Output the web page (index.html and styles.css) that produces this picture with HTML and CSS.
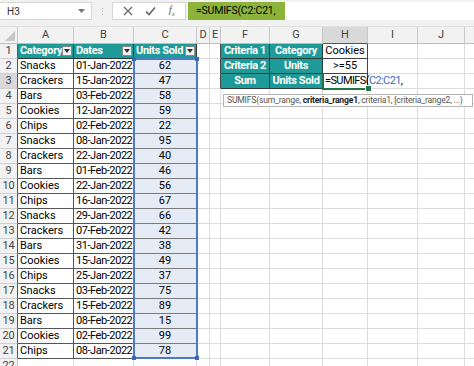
FILE: index.html
```html
<!DOCTYPE html>
<html lang="en">
<head>
    <meta charset="UTF-8">
    <meta name="viewport" content="width=device-width, initial-scale=1.0">
    <title>SUMIFS</title>
    <link rel="stylesheet" href="styles.css">
</head>
<body>
    <div class="formula-bar">
        <div class="name-box">
            <span>H3</span>
            <svg class="caret" width="7" height="4" viewBox="0 0 7 4"><polygon points="0,0 7,0 3.5,4" fill="#777"/></svg>
        </div>
        <div class="grip"><i></i><i></i><i></i></div>
        <div class="fx-buttons">
            <svg width="10" height="10" viewBox="0 0 10 10"><path d="M1 1 L9 9 M9 1 L1 9" stroke="#666" stroke-width="1.2" fill="none"/></svg>
            <svg width="11" height="10" viewBox="0 0 11 10"><path d="M1 5.5 L4 8.5 L10 1.5" stroke="#666" stroke-width="1.6" fill="none"/></svg>
            <span class="fx">f<sub>x</sub></span>
        </div>
        <div class="formula-input">
            <span class="formula-text">=SUMIFS(C2:C21,</span>
        </div>
    </div>

    <div class="sheet">
        <div class="row col-head">
            <div class="corner"></div>
            <div>A</div><div>B</div><div>C</div><div>D</div><div>E</div>
            <div>F</div><div>G</div><div class="sel">H</div><div>I</div><div>J</div><div></div>
        </div>

        <div class="row">
            <div class="rh">1</div>
            <div class="th">Category<span class="filter"><svg width="6" height="4" viewBox="0 0 6 4"><polygon points="0,0 6,0 3,4" fill="#333"/></svg></span></div>
            <div class="th">Dates<span class="filter"><svg width="6" height="4" viewBox="0 0 6 4"><polygon points="0,0 6,0 3,4" fill="#333"/></svg></span></div>
            <div class="th">Units Sold<span class="filter"><svg width="6" height="4" viewBox="0 0 6 4"><polygon points="0,0 6,0 3,4" fill="#333"/></svg></span></div>
            <div></div><div class="edge"></div>
            <div class="crit">Criteria 1</div><div class="crit">Category</div><div class="val">Cookies</div>
            <div></div><div></div><div></div>
        </div>
        <div class="row">
            <div class="rh">2</div>
            <div class="d">Snacks</div><div class="d date">01-Jan-2022</div><div class="d num">62</div>
            <div></div><div class="edge"></div>
            <div class="crit">Criteria 2</div><div class="crit">Units</div><div class="val">&gt;=55</div>
            <div></div><div></div><div></div>
        </div>
        <div class="row">
            <div class="rh sel">3</div>
            <div class="d">Crackers</div><div class="d date">15-Jan-2022</div><div class="d num">47</div>
            <div></div><div class="edge"></div>
            <div class="crit">Sum</div><div class="crit">Units Sold</div>
            <div class="val editing">=SUMIFS(<span class="ref">C2:C21</span>,</div>
            <div></div><div></div><div></div>
        </div>
        <div class="row">
            <div class="rh">4</div>
            <div class="d">Bars</div><div class="d date">03-Feb-2022</div><div class="d num">58</div>
            <div></div><div></div><div></div><div></div><div></div><div></div><div></div><div></div>
        </div>
        <div class="row">
            <div class="rh">5</div>
            <div class="d">Cookies</div><div class="d date">12-Jan-2022</div><div class="d num">59</div>
            <div></div><div></div><div></div><div></div><div></div><div></div><div></div><div></div>
        </div>
        <div class="row">
            <div class="rh">6</div>
            <div class="d">Chips</div><div class="d date">02-Feb-2022</div><div class="d num">22</div>
            <div></div><div></div><div></div><div></div><div></div><div></div><div></div><div></div>
        </div>
        <div class="row">
            <div class="rh">7</div>
            <div class="d">Snacks</div><div class="d date">08-Jan-2022</div><div class="d num">95</div>
            <div></div><div></div><div></div><div></div><div></div><div></div><div></div><div></div>
        </div>
        <div class="row">
            <div class="rh">8</div>
            <div class="d">Crackers</div><div class="d date">22-Jan-2022</div><div class="d num">40</div>
            <div></div><div></div><div></div><div></div><div></div><div></div><div></div><div></div>
        </div>
        <div class="row">
            <div class="rh">9</div>
            <div class="d">Bars</div><div class="d date">01-Feb-2022</div><div class="d num">46</div>
            <div></div><div></div><div></div><div></div><div></div><div></div><div></div><div></div>
        </div>
        <div class="row">
            <div class="rh">10</div>
            <div class="d">Cookies</div><div class="d date">22-Jan-2022</div><div class="d num">56</div>
            <div></div><div></div><div></div><div></div><div></div><div></div><div></div><div></div>
        </div>
        <div class="row">
            <div class="rh">11</div>
            <div class="d">Chips</div><div class="d date">16-Jan-2022</div><div class="d num">67</div>
            <div></div><div></div><div></div><div></div><div></div><div></div><div></div><div></div>
        </div>
        <div class="row">
            <div class="rh">12</div>
            <div class="d">Snacks</div><div class="d date">29-Jan-2022</div><div class="d num">66</div>
            <div></div><div></div><div></div><div></div><div></div><div></div><div></div><div></div>
        </div>
        <div class="row">
            <div class="rh">13</div>
            <div class="d">Crackers</div><div class="d date">07-Feb-2022</div><div class="d num">42</div>
            <div></div><div></div><div></div><div></div><div></div><div></div><div></div><div></div>
        </div>
        <div class="row">
            <div class="rh">14</div>
            <div class="d">Bars</div><div class="d date">31-Jan-2022</div><div class="d num">38</div>
            <div></div><div></div><div></div><div></div><div></div><div></div><div></div><div></div>
        </div>
        <div class="row">
            <div class="rh">15</div>
            <div class="d">Cookies</div><div class="d date">15-Jan-2022</div><div class="d num">49</div>
            <div></div><div></div><div></div><div></div><div></div><div></div><div></div><div></div>
        </div>
        <div class="row">
            <div class="rh">16</div>
            <div class="d">Chips</div><div class="d date">25-Jan-2022</div><div class="d num">37</div>
            <div></div><div></div><div></div><div></div><div></div><div></div><div></div><div></div>
        </div>
        <div class="row">
            <div class="rh">17</div>
            <div class="d">Snacks</div><div class="d date">03-Feb-2022</div><div class="d num">75</div>
            <div></div><div></div><div></div><div></div><div></div><div></div><div></div><div></div>
        </div>
        <div class="row">
            <div class="rh">18</div>
            <div class="d">Crackers</div><div class="d date">15-Feb-2022</div><div class="d num">89</div>
            <div></div><div></div><div></div><div></div><div></div><div></div><div></div><div></div>
        </div>
        <div class="row">
            <div class="rh">19</div>
            <div class="d">Bars</div><div class="d date">08-Feb-2022</div><div class="d num">15</div>
            <div></div><div></div><div></div><div></div><div></div><div></div><div></div><div></div>
        </div>
        <div class="row">
            <div class="rh">20</div>
            <div class="d">Cookies</div><div class="d date">02-Feb-2022</div><div class="d num">99</div>
            <div></div><div></div><div></div><div></div><div></div><div></div><div></div><div></div>
        </div>
        <div class="row">
            <div class="rh">21</div>
            <div class="d">Chips</div><div class="d date">08-Jan-2022</div><div class="d num">78</div>
            <div></div><div></div><div></div><div></div><div></div><div></div><div></div><div></div>
        </div>
        <div class="row">
            <div class="rh last">22</div>
            <div></div><div></div><div></div>
            <div></div><div></div><div></div><div></div><div></div><div></div><div></div><div></div>
        </div>

        <!-- range picked by the formula -->
        <div class="range">
            <i class="h tl"></i><i class="h tr"></i><i class="h bl"></i><i class="h br"></i>
        </div>
        <div class="active-cell"><i></i></div>
        <div class="tooltip">SUMIFS(sum_range, <b>criteria_range1</b>, criteria1, [criteria_range2, ...)</div>
    </div>
</body>
</html>
```

FILE: styles.css
```css
body {
    margin: 0;
    width: 474px;
    height: 366px;
    overflow: hidden;
    background-color: #fff;
    font-family: Roboto, "Liberation Sans", sans-serif;
    font-size: 11px;
    color: #000;
}

/* formula bar */
.formula-bar {
    display: flex;
    align-items: center;
    height: 27px;
    padding-bottom: 4px;
    box-sizing: border-box;
    background-color: #f1f1f1;
    border-bottom: 1px solid #e0e0e0;
}
.name-box {
    width: 92px;
    height: 18px;
    box-sizing: border-box;
    display: flex;
    align-items: center;
    justify-content: space-between;
    padding: 0 6px 0 7px;
    background-color: #fff;
    border: 1px solid #d6d6d6;
    border-left: none;
    color: #333;
    font-size: 10px;
}
.grip {
    width: 20px;
    display: flex;
    flex-direction: column;
    align-items: center;
    gap: 2px;
}
.grip i {
    width: 1px;
    height: 1px;
    background-color: #b0b0b0;
}
.fx-buttons {
    width: 74px;
    height: 18px;
    box-sizing: border-box;
    display: flex;
    align-items: center;
    justify-content: space-around;
    padding: 0 4px;
    background-color: #fff;
    border: 1px solid #d6d6d6;
}
.fx {
    font-family: "Liberation Serif", serif;
    font-style: italic;
    font-size: 11px;
    color: #666;
}
.fx sub {
    font-size: 7px;
}
.formula-input {
    flex: 1;
    height: 18px;
    margin-left: 2px;
    display: flex;
    background-color: #fff;
}
.formula-text {
    width: 97px;
    padding-left: 8px;
    box-sizing: border-box;
    line-height: 18px;
    background-color: #8cb43a;
    font-size: 10.5px;
    letter-spacing: -0.2px;
}

/* grid */
.sheet {
    position: relative;
}
.row {
    display: grid;
    grid-template-columns: 18px 56px 60px 63px 13px 11px 49px 53px 45px 50px 47px 40px;
    height: 15px;
}
.row > div {
    box-sizing: border-box;
    border-right: 1px solid #dcdcdc;
    border-bottom: 1px solid #dcdcdc;
    padding: 0 2px;
    line-height: 14px;
    white-space: nowrap;
}

.col-head {
    height: 17px;
    background-color: #f2f2f2;
}
.col-head > div {
    text-align: center;
    line-height: 16px;
    color: #444;
    border-right-color: #c8c8c8 !important;
    border-bottom-color: #bdbdbd !important;
}
.col-head .sel {
    background-color: #d9d9d9;
    border-bottom: 1px solid #217346 !important;
}
.corner {
    position: relative;
}
.corner::after {
    content: "";
    position: absolute;
    right: 2px;
    bottom: 2px;
    border-left: 10px solid transparent;
    border-bottom: 10px solid #c6c6c6;
}

.row > .rh {
    background-color: #f2f2f2;
    color: #444;
    text-align: center;
    padding: 0;
    letter-spacing: -0.3px;
    border-right: 1px solid #555;
    border-bottom-color: #d0d0d0;
}
.row > .rh.sel {
    background-color: #d9d9d9;
}
.row > .rh.last {
    border-right-color: #c8c8c8;
}

/* data table */
.row > .th {
    display: flex;
    align-items: center;
    justify-content: space-between;
    background-color: #1e9b98;
    color: #fff;
    font-weight: bold;
    letter-spacing: -0.35px;
    border-right-color: #2d3b3b;
    border-bottom-color: #2d3b3b;
    padding-right: 1px;
}
.filter {
    width: 10px;
    height: 10px;
    flex-shrink: 0;
    box-sizing: border-box;
    display: flex;
    align-items: center;
    justify-content: center;
    background-color: #f2f2f2;
    border: 1px solid #8a8a8a;
}
.row > .d {
    border-right-color: #555;
    border-bottom-color: #555;
}
.row > .date {
    text-align: right;
    padding-right: 3px;
    letter-spacing: -0.45px;
}
.row > .num {
    text-align: center;
    background-color: #e5ecf6;
    border-bottom-color: #7a7a7a;
}

/* criteria table */
.row > .edge {
    border-right-color: #444;
}
.row > .crit {
    background-color: #1e9b98;
    color: #fff;
    font-weight: bold;
    text-align: center;
    letter-spacing: -0.35px;
    padding: 0;
    border-right-color: #2d3b3b;
    border-bottom-color: #2d3b3b;
}
.row > .val {
    text-align: center;
    border-right-color: #444;
    border-bottom-color: #444;
}
.row > .editing {
    text-align: left;
    overflow: visible;
    letter-spacing: -0.6px;
}
.ref {
    color: #3a6cc6;
}

/* overlays */
.range {
    position: absolute;
    left: 133px;
    top: 31px;
    width: 65px;
    height: 301px;
    box-sizing: border-box;
    border: 2px solid #4f78c8;
}
.range .h {
    position: absolute;
    width: 4px;
    height: 4px;
    background-color: #3c66b8;
}
.tl { left: -3px; top: -3px; }
.tr { right: -3px; top: -3px; }
.bl { left: -3px; bottom: -3px; }
.br { right: -3px; bottom: -3px; }

.active-cell {
    position: absolute;
    left: 322px;
    top: 46px;
    width: 47px;
    height: 17px;
    box-sizing: border-box;
    border-left: 2px solid #217346;
    border-bottom: 2px solid #217346;
}
.active-cell i {
    position: absolute;
    right: -3px;
    bottom: -4px;
    width: 5px;
    height: 5px;
    background-color: #217346;
    border: 1px solid #fff;
}

.tooltip {
    position: absolute;
    left: 223px;
    top: 67px;
    width: 250px;
    height: 13px;
    box-sizing: border-box;
    padding-left: 3px;
    line-height: 11px;
    background-color: #fff;
    border: 1px solid #b4b4b4;
    color: #555;
    font-size: 8.6px;
    letter-spacing: -0.2px;
    white-space: nowrap;
    overflow: hidden;
}
.tooltip b {
    color: #222;
}
```
